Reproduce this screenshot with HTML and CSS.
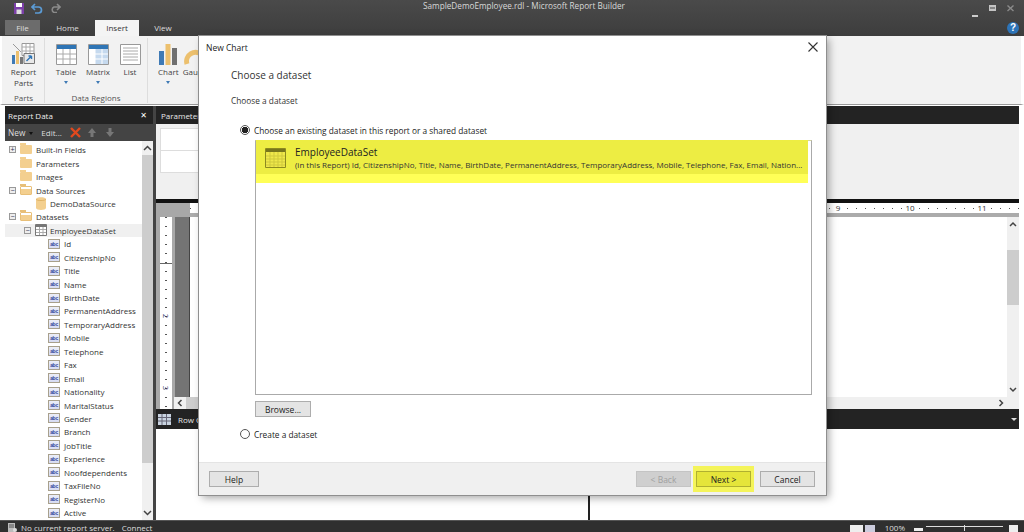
FILE: index.html
```html
<!DOCTYPE html>
<html lang="en">
<head>
<meta charset="utf-8">
<title>SampleDemoEmployee.rdl - Microsoft Report Builder</title>
<link rel="stylesheet" href="styles.css">
</head>
<body>
<div class="app">
  <header class="chrome">
    <div class="titlebar">
      <div class="qat">
        <svg width="10" height="11" viewBox="0 0 10 11"><path d="M0 0h10v11H0z" fill="#7b3fa8"/><path d="M2 0h6v4H2z" fill="#fff"/><path d="M2.500 6.500h5V11h-5z" fill="#ddd"/></svg>
        <svg width="12" height="11" viewBox="0 0 12 11"><path d="M4 1 1 4l3 3M1 4h6.500a3 3 0 0 1 0 6H4" fill="none" stroke="#5b9bd5" stroke-width="1.700"/></svg>
        <svg width="11" height="10" viewBox="0 0 11 10"><path d="M7 1l3 3-3 3M10 4H4a3 3 0 0 0 0 5.500h3" fill="none" stroke="#8a8a8a" stroke-width="1.600"/></svg>
      </div>
      <div class="doc-title">SampleDemoEmployee.rdl - Microsoft Report Builder</div>
      <div class="winctl">
        <svg width="6" height="13" viewBox="0 0 6 13"><path d="M0 11h6" stroke="#ccc" stroke-width="2"/></svg>
        <svg width="7" height="7" viewBox="0 0 7 7"><path d="M0 0h7v6H0z" fill="#c4c4c4"/><path d="M1 3h5" stroke="#444"/></svg>
        <svg width="7" height="7" viewBox="0 0 7 7"><path d="M.5.500l6 5.500M6.500.500l-6 5.500" stroke="#8a8a8a" stroke-width="1.400"/></svg>
      </div>
    </div>
    <div class="tabrow">
      <nav class="tabs">
        <span class="tab tab-file">File</span>
        <span class="tab tab-home">Home</span>
        <span class="tab tab-active">Insert</span>
        <span class="tab tab-view">View</span>
      </nav>
      <span class="help-dot">?</span>
    </div>
  </header>

  <section class="ribbon">
    <div class="group group-parts">
      <div class="tools">
        <div class="tool tool-parts">
          <svg width="23" height="21" viewBox="0 0 23 21"><path d="M10 .5h12v12H10z" fill="#fff" stroke="#999"/><path d="M10 4h12M14 .5v12M18 .5v12M10 8h12" stroke="#aaa"/><path d="M0 12h3v9H0z" fill="#3f7ab5"/><path d="M4 8h3v13H4z" fill="#ecc06e"/><path d="M8 14h3v7H8z" fill="#777"/><path d="M12 10.500h10.500v10H12z" fill="#e8e8e8" stroke="#777"/><path d="M14.500 18l5-5M19.500 13v3M19.500 13h-3" stroke="#2e75b6" stroke-width="1.400" fill="none"/><path d="M1 1l8 8" stroke="#999"/></svg>
          <span class="tool-label">Report<br>Parts</span>
        </div>
      </div>
      <div class="group-name">Parts</div>
    </div>
    <div class="group group-regions">
      <div class="tools">
        <div class="tool">
          <svg width="21" height="21" viewBox="0 0 21 21"><path d="M.5.500h20v20H.5z" fill="#fff" stroke="#999"/><path d="M1 1h19v4H1z" fill="#2f75b5"/><path d="M1 10h19M1 15h19M7 5v15M14 5v15" stroke="#aaa"/></svg>
          <span class="tool-label">Table</span><i class="caret"></i>
        </div>
        <div class="tool">
          <svg width="21" height="21" viewBox="0 0 21 21"><path d="M.5.500h20v20H.5z" fill="#fff" stroke="#999"/><path d="M1 1h19v4H1z" fill="#2f75b5"/><path d="M7 5h13v15H7z" fill="#c5d9ee"/><path d="M1 10h19M1 15h19M7 5v15M14 5v15" stroke="#fff"/></svg>
          <span class="tool-label">Matrix</span><i class="caret"></i>
        </div>
        <div class="tool">
          <svg width="21" height="21" viewBox="0 0 21 21"><path d="M.5.500h20v20H.5z" fill="#fff" stroke="#999"/><path d="M3 4h15M3 7h15M3 10h15M3 13h15M3 16h15" stroke="#aaa"/></svg>
          <span class="tool-label">List</span>
        </div>
      </div>
      <div class="group-name">Data Regions</div>
    </div>
    <div class="group group-viz">
      <div class="tools">
        <div class="tool">
          <svg width="18" height="21" viewBox="0 0 18 21"><path d="M0 7h5v14H0z" fill="#3f7ab5"/><path d="M6.500 0h5v21h-5z" fill="#ecc06e"/><path d="M13 4h5v17h-5z" fill="#707070"/></svg>
          <span class="tool-label">Chart</span><i class="caret"></i>
        </div>
        <div class="tool">
          <svg width="21" height="21" viewBox="0 0 21 21"><path d="M3 20a9 9 0 0 1 15-9" fill="none" stroke="#ecc06e" stroke-width="5"/></svg>
          <span class="tool-label">Gauge</span>
        </div>
      </div>
    </div>
  </section>

  <main class="workspace">
    <aside class="report-data">
      <div class="pane-head"><span>Report Data</span><b class="pane-close">✕</b></div>
      <div class="pane-tools">
        <span>New</span><i class="mini-caret"></i><span class="edit">Edit...</span>
        <svg class="t-x" width="11" height="11" viewBox="0 0 11 11"><path d="M1 1l9 9M10 1l-9 9" stroke="#e2491e" stroke-width="2.400"/></svg>
        <svg class="t-up" width="8" height="9" viewBox="0 0 8 9"><path d="M4 0l4 5H5.500v4h-3V5H0z" fill="#777"/></svg>
        <svg width="8" height="9" viewBox="0 0 8 9"><path d="M4 9 0 4h2.500V0h3v4H8z" fill="#777"/></svg>
      </div>
      <div class="tree-wrap">
        <ul class="tree">
          <li class="node"><i class="exp">+</i><i class="folder"></i>Built-in Fields</li>
          <li class="node"><i class="exp none"></i><i class="folder"></i>Parameters</li>
          <li class="node"><i class="exp none"></i><i class="folder"></i>Images</li>
          <li class="node"><i class="exp">−</i><i class="folder open"></i>Data Sources</li>
          <li class="node lvl1"><svg class="ico" width="10" height="13" viewBox="0 0 10 13"><path d="M0 2c0-2.500 10-2.500 10 0v9c0 2.500-10 2.500-10 0z" fill="#f3cf8f"/><path d="M0 2c0 2 10 2 10 0" fill="none" stroke="#e0b366"/></svg>DemoDataSource</li>
          <li class="node"><i class="exp">−</i><i class="folder open"></i>Datasets</li>
          <li class="node sel lvl-ds"><i class="exp">−</i><svg class="ico" width="12" height="12" viewBox="0 0 12 12"><path d="M.5.500h11v11H.5z" fill="#fff" stroke="#777"/><path d="M1 1h10v2H1z" fill="#777"/><path d="M1 5.500h10M1 8.500h10M4.500 3v8M8 3v8" stroke="#aaa"/></svg>EmployeeDataSet</li>
          <li class="node lvl2"><i class="field"></i>Id</li>
          <li class="node lvl2"><i class="field"></i>CitizenshipNo</li>
          <li class="node lvl2"><i class="field"></i>Title</li>
          <li class="node lvl2"><i class="field"></i>Name</li>
          <li class="node lvl2"><i class="field"></i>BirthDate</li>
          <li class="node lvl2"><i class="field"></i>PermanentAddress</li>
          <li class="node lvl2"><i class="field"></i>TemporaryAddress</li>
          <li class="node lvl2"><i class="field"></i>Mobile</li>
          <li class="node lvl2"><i class="field"></i>Telephone</li>
          <li class="node lvl2"><i class="field"></i>Fax</li>
          <li class="node lvl2"><i class="field"></i>Email</li>
          <li class="node lvl2"><i class="field"></i>Nationality</li>
          <li class="node lvl2"><i class="field"></i>MaritalStatus</li>
          <li class="node lvl2"><i class="field"></i>Gender</li>
          <li class="node lvl2"><i class="field"></i>Branch</li>
          <li class="node lvl2"><i class="field"></i>JobTitle</li>
          <li class="node lvl2"><i class="field"></i>Experience</li>
          <li class="node lvl2"><i class="field"></i>Noofdependents</li>
          <li class="node lvl2"><i class="field"></i>TaxFileNo</li>
          <li class="node lvl2"><i class="field"></i>RegisterNo</li>
          <li class="node lvl2"><i class="field"></i>Active</li>
        </ul>
        <div class="tree-scroll">
          <svg width="11" height="14" viewBox="0 0 11 14"><path d="M2 9l3.500-3.500L9 9" fill="none" stroke="#444" stroke-width="1.500"/></svg>
          <div class="tree-thumb"></div>
          <svg width="11" height="14" viewBox="0 0 11 14"><path d="M2 5l3.500 3.500L9 5" fill="none" stroke="#444" stroke-width="1.500"/></svg>
        </div>
      </div>
    </aside>

    <div class="design">
      <div class="dark-head"><span>Parameters</span></div>
      <div class="params">
        <div class="param-grid"><div class="param-row"></div><div class="param-row"></div></div>
      </div>
      <div class="canvas-area">
        <div class="ruler-top">
          <div class="corner"></div>
          <div class="ruler-h">
            <span>9</span><span>10</span><span>11</span>
          </div>
        </div>
        <div class="canvas-lower">
          <div class="ruler-v"><span class="rv-num">2</span><span class="rv-num">3</span></div>
          <div class="canvas-main">
            <div class="canvas-body">
              <div class="margin-bar"></div>
              <div class="sheet"></div>
              <div class="canvas-scroll">
                <svg width="12" height="14" viewBox="0 0 12 14"><path d="M3 9l3-3 3 3" fill="none" stroke="#444" stroke-width="1.500"/></svg>
                <div class="canvas-thumb"></div>
                <svg width="12" height="14" viewBox="0 0 12 14"><path d="M3 5l3 3 3-3" fill="none" stroke="#444" stroke-width="1.500"/></svg>
              </div>
            </div>
            <div class="hscroll">
              <svg width="12" height="12" viewBox="0 0 12 12"><path d="M7.500 3 4.500 6l3 3" fill="none" stroke="#444" stroke-width="1.500"/></svg>
              <div class="h-thumb"></div>
              <svg width="12" height="12" viewBox="0 0 12 12"><path d="M4.500 3l3 3-3 3" fill="none" stroke="#444" stroke-width="1.500"/></svg>
            </div>
          </div>
        </div>
      </div>
      <div class="dark-head row-head">
        <svg width="13" height="11" viewBox="0 0 13 11"><path d="M0 0h13v11H0z" fill="#c9d3e0"/><path d="M0 3.500h13M0 7h13M4 0v11M8.500 0v11" stroke="#667"/></svg>
        <span>Row Groups</span>
        <i class="row-caret"></i>
      </div>
      <div class="groups">
        <div class="group-split"></div>
      </div>
    </div>
  </main>

  <footer class="status">
    <svg width="10" height="9" viewBox="0 0 10 9"><path d="M0 0h7v9H0z" fill="#bbb"/><path d="M1 2h5M1 4h5" stroke="#555"/><circle cx="7" cy="7" r="2" fill="#ddd"/></svg>
    <span class="st-text">No current report server.</span><span class="st-text connect">Connect</span>
    <div class="status-right">
      <span class="view-btn active"></span><span class="view-btn"></span>
      <span class="st-text zoom-pct">100%</span>
      <i class="zoom-minus"></i>
      <span class="zoom-track"><i class="zoom-tick"></i></span>
      <i class="zoom-plus"></i>
    </div>
  </footer>

  <div class="dialog" role="dialog">
    <div class="dlg-title"><span>New Chart</span>
      <svg width="10" height="10" viewBox="0 0 10 10"><path d="M.5.500l9 9M9.500.500l-9 9" stroke="#333" stroke-width="1.100"/></svg>
    </div>
    <div class="dlg-body">
      <h1 class="dlg-h1">Choose a dataset</h1>
      <h2 class="dlg-h2">Choose a dataset</h2>
      <label class="radio-line"><i class="radio on"></i>Choose an existing dataset in this report or a shared dataset</label>
      <div class="list">
        <div class="list-item">
          <div class="item-main">
            <svg width="21" height="20" viewBox="0 0 21 20"><path d="M.5.500h20v19H.5z" fill="#efe84a" stroke="#8c8a20"/><path d="M1 1h19v3H1z" fill="#77761c"/><path d="M1 8h19M1 11h19M1 14h19M1 17h19M5 4v15M9 4v15M13 4v15M17 4v15" stroke="#cfc93c"/></svg>
            <div class="item-text">
              <div class="item-name">EmployeeDataSet</div>
              <div class="item-desc">(in this Report) Id, CitizenshipNo, Title, Name, BirthDate, PermanentAddress, TemporaryAddress, Mobile, Telephone, Fax, Email, Nation...</div>
            </div>
          </div>
          <div class="item-foot"></div>
        </div>
      </div>
      <button class="btn browse">Browse...</button>
      <label class="radio-line create"><i class="radio"></i>Create a dataset</label>
    </div>
    <div class="dlg-foot">
      <button class="btn">Help</button>
      <div class="foot-right">
        <button class="btn disabled">&lt; Back</button>
        <span class="next-hl"><button class="btn next">Next &gt;</button></span>
        <button class="btn">Cancel</button>
      </div>
    </div>
  </div>
</div>
</body>
</html>
```
FILE: styles.css
```css
* { box-sizing: border-box; }
html, body { margin: 0; height: 100%; overflow: hidden; }
body { font-family: "Open Sans", "Noto Sans", "Liberation Sans", sans-serif; font-size: 8.500px; color: #222; }
ul { list-style: none; margin: 0; padding: 0; }
i { display: block; font-style: normal; }
.app { position: relative; width: 1024px; height: 532px; display: flex; flex-direction: column; background: #fff; overflow: hidden; }

.chrome { height: 36px; flex: none; background: linear-gradient(#4a4a4a, #3d3d3d); color: #e6e6e6; }
.titlebar { position: relative; height: 20px; display: flex; align-items: flex-start; justify-content: space-between; padding: 3px 10px 0 14px; }
.qat { display: flex; gap: 7px; align-items: flex-start; }
.doc-title { position: absolute; left: 24px; right: 0; text-align: center; top: 0; line-height: 12px; font-size: 8.200px; color: #d8d8d8; }
.winctl { display: flex; align-items: flex-start; gap: 11px; margin-top: 2px; }
.tabrow { height: 16px; display: flex; justify-content: space-between; align-items: flex-start; padding: 0 5px 0 5px; }
.tabs { display: flex; height: 16px; }
.tab { text-align: center; line-height: 15px; color: #ddd; font-size: 8px; }
.tab-file { width: 35px; background: #6c6c6c; height: 15px; }
.tab-home { width: 55px; }
.tab-active { width: 44px; background: #f4f4f4; color: #333; height: 16px; }
.tab-view { width: 48px; }
.help-dot { width: 12px; height: 12px; border-radius: 50%; background: #2d74b8; color: #fff; font: bold 10px/12px "Liberation Sans", sans-serif; text-align: center; margin-top: 2px; }

.ribbon { height: 69px; flex: none; display: flex; background: #f2f2f2; border-left: 2px solid #fff; border-right: 3px solid #fff; border-bottom: 1px solid #999; padding: 2px 0 0 1px; }
.group { border-right: 1px solid #ddd; height: 65px; display: flex; flex-direction: column; }
.group-parts { width: 42px; }
.group-regions { width: 103px; }
.group-viz { width: 60px; border-right: 0; }
.tools { flex: 1; display: flex; }
.tool { display: flex; flex-direction: column; align-items: center; width: 32px; font-size: 8px; color: #444; line-height: 11px; padding-top: 6px; }
.tool svg { margin-bottom: 1px; flex: none; }
.tool-parts { width: 41px; padding-top: 5px; }
.tool-parts svg { margin-bottom: 2px; }
.group-regions .tools { padding-left: 5px; }
.group-viz .tools { padding-left: 7px; }
.tool-label { text-align: center; white-space: nowrap; }
.caret { width: 0; height: 0; margin-top: 4px; border: 2.500px solid transparent; border-top: 3px solid #3f7ab5; border-bottom: 0; }
.group-name { height: 13px; text-align: center; font-size: 8px; color: #555; line-height: 15px; }

.workspace { flex: 1; min-height: 0; display: flex; padding: 1px 5px 0 5px; background: #fff; }
.report-data { width: 151px; flex: none; display: flex; flex-direction: column; border-right: 3px solid #444; }
.pane-head { height: 18px; flex: none; background: #232323; color: #eee; display: flex; align-items: center; justify-content: space-between; padding: 0 6px 0 3px; font-size: 8px; }
.pane-close { font: bold 8px "DejaVu Sans", sans-serif; color: #fff; }
.pane-tools { height: 17px; flex: none; background: #444; color: #ddd; display: flex; align-items: center; padding-left: 3px; font-size: 8.300px; }
.mini-caret { width: 0; height: 0; margin: 1px 8px 0 4px; border: 2.500px solid transparent; border-top: 3px solid #111; border-bottom: 0; }
.edit { margin-right: 8px; font-size: 8px; }
.t-x { margin-right: 7px; }
.t-up { margin-right: 10px; }
.tree-wrap { flex: 1; min-height: 0; display: flex; }
.tree { flex: 1; min-width: 0; padding-top: 2px; color: #333; font-size: 8px; overflow: hidden; }
.node { height: 13.450px; display: flex; align-items: center; padding-left: 4px; white-space: nowrap; }
.exp { width: 7px; height: 7px; border: 1px solid #999; background: #eee; font: 7px/5px "Liberation Sans", sans-serif; text-align: center; color: #335; margin-right: 4px; flex: none; }
.exp.none { visibility: hidden; }
.folder { position: relative; width: 12px; height: 9px; background: #f3cf8f; margin-right: 4px; flex: none; border-radius: 1px; }
.folder::before { content: ""; position: absolute; left: 0; top: -2px; width: 6px; height: 2px; background: #f3cf8f; }
.folder.open { background: linear-gradient(#fff 25%, #f3cf8f 25%); border: 1px solid #e8bf78; }
.folder.open::before { left: -1px; top: -3px; background: #e8bf78; }
.ico { margin-right: 4px; flex: none; }
.lvl1 { padding-left: 31px; }
.lvl-ds { padding-left: 19px; }
.lvl-ds .exp { margin-right: 4px; }
.lvl-ds .ico { margin-right: 3px; }
.lvl2 { padding-left: 43px; }
.sel { background: #f0f0f0; }
.field { width: 12px; height: 10px; margin-right: 4px; border: 1px solid #a8a08c; background: linear-gradient(#eceef8, #d6dbf2); flex: none; font: bold 5px/8px "Liberation Sans", sans-serif; color: #34449a; text-align: center; overflow: hidden; }
.field::after { content: "abc"; letter-spacing: -.3px; }
.tree-scroll { width: 11px; flex: none; display: flex; flex-direction: column; background: #f0f0f0; align-items: center; }
.tree-thumb { width: 100%; height: 308px; background: #cdcdcd; margin-bottom: auto; }

.design { flex: 1; min-width: 0; display: flex; flex-direction: column; }
.dark-head { height: 18px; flex: none; background: #232323; color: #e8e8e8; display: flex; align-items: center; padding-left: 5px; font-size: 8px; }
.params { height: 75px; flex: none; background: #f0f0f0; padding: 4px 0 0 4px; }
.param-grid { width: 60px; height: 45px; background: #fff; border: 1px solid #ddd; }
.param-row { height: 22px; border-bottom: 1px solid #ddd; }
.canvas-area { height: 210px; flex: none; display: flex; flex-direction: column; border-top: 4px solid #111; }
.ruler-top { height: 14px; flex: none; display: flex; }
.corner { width: 34px; flex: none; background: #a8a8a8; }
.ruler-h { flex: 1; background: repeating-linear-gradient(90deg, #555 0 1px, transparent 1px 9px) 0 5px / 100% 1px no-repeat #fff; border-bottom: 4px solid #ababab; display: flex; padding-left: 612px; font-size: 8px; line-height: 10px; color: #333; }
.ruler-h span { width: 72px; text-align: center; background: linear-gradient(#fff, #fff) center / 10px 100% no-repeat; }
.canvas-lower { flex: 1; min-height: 0; display: flex; }
.ruler-v { width: 18px; flex: none; background: repeating-linear-gradient(#555 0 1px, transparent 1px 9px) center 0 / 2px 100% no-repeat, linear-gradient(#666, #666) center 46px / 13px 1px no-repeat #fff; border-left: 4px solid #a8a8a8; border-right: 2px solid #a8a8a8; display: flex; flex-direction: column; align-items: center; font-size: 7.500px; color: #336; padding-top: 63px; }
.rv-num { height: 72px; line-height: 72px; transform: rotate(90deg); }
.canvas-main { flex: 1; min-width: 0; display: flex; flex-direction: column; }
.canvas-body { flex: 1; min-height: 0; display: flex; }
.margin-bar { width: 16px; flex: none; background: #747474; border-right: 1px solid #444; border-left: 1px solid #a8a8a8; }
.sheet { flex: 1; background: #fff; }
.canvas-scroll { width: 12px; flex: none; display: flex; flex-direction: column; background: #f0f0f0; }
.canvas-thumb { height: 55px; flex: none; background: #cdcdcd; margin: 19px 0 auto; }
.hscroll { height: 12px; flex: none; background: #f0f0f0; display: flex; align-items: center; padding-right: 12px; }
.h-thumb { width: 100px; height: 100%; background: #cdcdcd; margin-right: auto; }
.row-head { height: 20px; padding-left: 2px; padding-right: 2px; }
.row-head span { margin-left: 7px; }
.row-caret { margin-left: auto; width: 0; height: 0; border: 3px solid transparent; border-top: 3px solid #ddd; border-bottom: 0; }
.groups { flex: 1; display: flex; background: #fff; padding-left: 432px; }
.group-split { width: 2px; background: #222; }

.status { height: 12px; flex: none; background: #2f2f2f; color: #ddd; font-size: 8px; display: flex; align-items: flex-start; padding: 2px 0 0 8px; border-top: 1px solid #555; overflow: hidden; }
.st-text { line-height: 9px; margin-left: 3px; }
.connect { margin-left: 7px; }
.status-right { margin-left: auto; display: flex; align-items: flex-start; padding-top: 2px; padding-right: 6px; }
.view-btn { width: 13px; height: 10px; background: #ccd; margin-right: 2px; }
.view-btn + .view-btn { width: 10px; }
.view-btn.active { background: #eee; }
.zoom-pct { margin: -2px 9px 0 8px; }
.zoom-minus { width: 9px; height: 3px; background: #eee; margin: 3px 3px 0 0; }
.zoom-track { position: relative; width: 77px; height: 1px; background: #ddd; margin: 1px 6px 0 0; }
.zoom-tick { position: absolute; left: 38px; top: -1px; width: 1px; height: 6px; background: #ddd; }
.zoom-plus { width: 9px; height: 9px; background: #eee; }

.dialog { position: absolute; left: 199px; top: 36px; width: 627px; height: 459px; background: #fff; box-shadow: 0 0 0 1px #8f8f8f, 3px 3px 8px rgba(0,0,0,.35); display: flex; flex-direction: column; }
.dlg-title { height: 21px; flex: none; display: flex; justify-content: space-between; align-items: center; padding: 1px 8px 0 7px; font-size: 8.500px; color: #222; }
.dlg-body { flex: 1; min-height: 0; padding: 0 14px 0 32px; }
.dlg-h1 { margin: 11px 0 0; font-weight: 400; font-size: 10px; line-height: 14px; color: #333; }
.dlg-h2 { margin: 13px 0 0; font-weight: 400; font-size: 8.300px; line-height: 12px; color: #333; }
.radio-line { display: flex; align-items: center; margin: 17px 0 0 9px; height: 12px; font-size: 8.300px; color: #222; }
.radio { width: 10px; height: 10px; border: 1px solid #555; border-radius: 50%; background: #fff; margin-right: 4px; flex: none; }
.radio.on { background: radial-gradient(circle, #222 0 3px, #fff 3.500px); }
.list { margin: 4px 0 0 24px; height: 255px; border: 1px solid #aaa; border-top: 1px solid #d4d4a0; }
.list-item { margin-top: -1px; margin-right: 3px; background: #ffff57; }
.item-main { height: 34px; display: flex; align-items: center; padding: 1px 0 0 9px; gap: 9px; background: #eded43; }
.item-foot { height: 9px; }
.item-name { font-size: 10px; line-height: 13px; color: #222; }
.item-desc { font-size: 8px; line-height: 11px; color: #333; white-space: nowrap; }
.btn { font: 8.500px "Open Sans", "Noto Sans", sans-serif; height: 16px; background: #e4e4e4; border: 1px solid #adadad; color: #222; padding: 0; width: 56px; }
.browse { display: block; margin: 6px 0 0 24px; }
.create { margin-top: 11px; }
.dlg-foot { height: 33px; flex: none; background: #f0f0f0; border-top: 1px solid #e4e4e4; display: flex; justify-content: space-between; align-items: center; padding: 0 11px 0 10px; }
.dlg-foot .btn { width: 50px; }
.foot-right { display: flex; align-items: center; }
.foot-right .btn { width: 55px; }
.disabled { background: #cfcfcf; color: #a0a0a0; border-color: #c4c4c4; }
.next-hl { background: #f4f45a; padding: 5px 3px; margin: -5px 6px -5px 2px; display: block; line-height: 0; }
.dlg-foot .next { background: #e5e53a; border-color: #b0b030; }
```
